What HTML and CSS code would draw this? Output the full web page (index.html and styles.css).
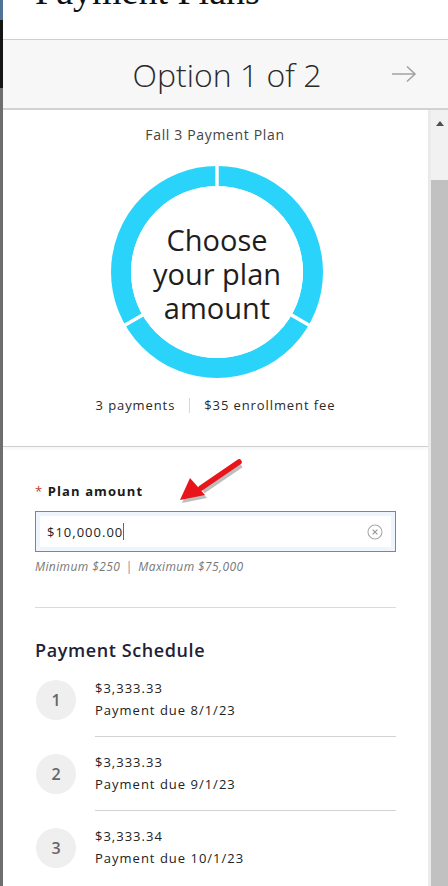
FILE: index.html
```html
<!DOCTYPE html>
<html lang="en">
<head>
<meta charset="utf-8">
<title>Payment Plans</title>
<link rel="stylesheet" href="styles.css">
</head>
<body>
<div class="frame">
  <div class="edge"></div>
  <div class="panel">
    <header class="top">
      <h1 class="title">Payment Plans</h1>
    </header>
    <div class="option-bar">
      <span></span>
      <span class="option-text">Option 1 of 2</span>
      <svg class="next" width="26" height="18" viewBox="0 0 26 18">
        <path d="M1 9H24M16 1.5L24 9L16 16.5" fill="none" stroke="#a3a3a3" stroke-width="1.6"/>
      </svg>
    </div>
    <div class="body-row">
      <main class="content">
        <section class="summary">
          <div class="plan-name">Fall 3 Payment Plan</div>
          <div class="donut">
            <svg class="ring" width="212" height="212" viewBox="0 0 212 212">
              <circle cx="106" cy="106" r="96" fill="none" stroke="#2ad3f9" stroke-width="20"/>
              <g stroke="#fff" stroke-width="3.5">
                <line x1="106" y1="106" x2="106" y2="-2"/>
                <line x1="106" y1="106" x2="106" y2="-2" transform="rotate(120 106 106)"/>
                <line x1="106" y1="106" x2="106" y2="-2" transform="rotate(240 106 106)"/>
              </g>
              <circle cx="106" cy="106" r="86" fill="#fff"/>
            </svg>
            <div class="donut-text">Choose<br>your plan<br>amount</div>
          </div>
          <div class="stats"><span>3 payments</span><span class="sep"></span><span>$35 enrollment fee</span></div>
        </section>
        <section class="form">
          <label class="label"><span class="req">*</span> Plan amount</label>
          <div class="input">
            <span class="value">$10,000.00</span><span class="caret"></span>
            <svg class="clear" width="16" height="16" viewBox="0 0 16 16">
              <circle cx="8" cy="8" r="7" fill="none" stroke="#a8a8a8" stroke-width="1.1"/>
              <path d="M5.6 5.6L10.4 10.4M10.4 5.6L5.6 10.4" stroke="#9a9a9a" stroke-width="1.2"/>
            </svg>
          </div>
          <div class="hint">Minimum $250 <span class="bar">|</span> Maximum $75,000</div>
          <hr class="rule">
          <h2 class="sched-title">Payment Schedule</h2>
          <ul class="schedule">
            <li class="pay">
              <span class="num">1</span>
              <div class="pay-text"><div>$3,333.33</div><div>Payment due 8/1/23</div></div>
            </li>
            <li class="pay">
              <span class="num">2</span>
              <div class="pay-text"><div>$3,333.33</div><div>Payment due 9/1/23</div></div>
            </li>
            <li class="pay">
              <span class="num">3</span>
              <div class="pay-text last"><div>$3,333.34</div><div>Payment due 10/1/23</div></div>
            </li>
          </ul>
        </section>
        <svg class="annot" width="80" height="60" viewBox="0 0 80 60">
          <g transform="translate(2 3)" opacity="0.25">
            <path d="M60 4L22 30" stroke="#000" stroke-width="5.5"/>
            <path d="M1 42L11 20L26 37Z" fill="#000"/>
          </g>
          <path d="M60 4L22 30" stroke="#e8151b" stroke-width="5.5" stroke-linecap="round"/>
          <path d="M1 42L11 20L26 37Z" fill="#e8151b"/>
        </svg>
      </main>
      <div class="scrollbar">
        <div class="scroll-up"></div>
        <div class="thumb"></div>
      </div>
    </div>
  </div>
</div>
</body>
</html>
```
FILE: styles.css
```css
* { box-sizing: border-box; }
html, body { margin: 0; padding: 0; }
body {
  width: 448px;
  height: 886px;
  overflow: hidden;
  background: #fff;
  font-family: "Open Sans", "Noto Sans", sans-serif;
  color: #222;
}
.frame { display: flex; height: 886px; }
.edge {
  width: 3px;
  flex: none;
  background: linear-gradient(to bottom, #4f7394 0, #4f7394 20px, #151515 20px, #151515 88px, #6e6e6e 88px, #6e6e6e 100%);
}
.panel { flex: 1; display: flex; flex-direction: column; min-width: 0; }
.top {
  height: 40px;
  overflow: hidden;
  border-bottom: 1px solid #cfcfcf;
  padding-left: 32px;
}
.title {
  margin: -28px 0 0;
  font-family: "Liberation Serif", serif;
  font-weight: normal;
  font-size: 38px;
  line-height: 38px;
  color: #111;
}
.option-bar {
  height: 70px;
  background: #f7f7f7;
  border-bottom: 2px solid #d2d2d2;
  display: grid;
  grid-template-columns: 1fr auto 1fr;
  align-items: center;
  padding: 0 31px 0 34px;
}
.option-text {
  font-size: 32px;
  font-weight: 300;
  color: #2a2a2a;
  line-height: 40px;
  padding-top: 1px;
}
.next { justify-self: end; }
.body-row { flex: 1; display: flex; min-height: 0; }
.content { position: relative; width: 425px; flex: none; }
.summary {
  padding: 16px 0 32px;
  border-bottom: 1px solid #cfcfcf;
  box-shadow: 0 2px 3px rgba(0,0,0,0.04);
  display: flex;
  flex-direction: column;
  align-items: center;
}
.plan-name {
  font-size: 14px;
  line-height: 18px;
  letter-spacing: 0.65px;
  color: #444;
  margin-left: -1px;
}
.donut {
  display: grid;
  margin-top: 22px;
  margin-left: 3px;
  width: 212px;
  height: 212px;
}
.ring, .donut-text { grid-area: 1 / 1; }
.donut-text {
  align-self: center;
  justify-self: center;
  text-align: center;
  font-size: 29px;
  line-height: 34px;
  padding-top: 4px;
  color: #1e1e1e;
}
.stats {
  margin-top: 18px;
  font-size: 13px;
  line-height: 18px;
  letter-spacing: 0.9px;
  color: #2a2a2a;
  display: flex;
  align-items: center;
}
.sep {
  width: 1px;
  height: 15px;
  background: #d6d6d6;
  margin: 0 14px 0 14px;
}
.form { padding: 35px 32px 0 32px; }
.label {
  display: block;
  font-size: 13px;
  font-weight: 700;
  line-height: 18px;
  letter-spacing: 1.1px;
  color: #1a1a1a;
}
.req { color: #c0392b; font-weight: 400; }
.input {
  margin-top: 11px;
  width: 361px;
  height: 41px;
  border: 1px solid #4a8fe0;
  box-shadow: inset 0 0 0 4px #eef5fd;
  display: flex;
  align-items: center;
  padding: 0 12px 0 11px;
  font-size: 13px;
  letter-spacing: 1px;
  color: #222;
}
.caret { width: 1px; height: 17px; background: #8e44ad; }
.clear { margin-left: auto; }
.hint {
  margin-top: 7px;
  font-size: 12px;
  line-height: 16px;
  letter-spacing: 0.4px;
  font-style: italic;
  color: #777;
}
.bar { color: #8e7f99; font-style: normal; margin: 0 2px; }
.rule {
  margin: 32px 0 0;
  width: 361px;
  border: none;
  border-top: 1px solid #dadada;
  height: 0;
}
.sched-title {
  margin: 30px 0 0;
  font-size: 18px;
  font-weight: 600;
  line-height: 24px;
  letter-spacing: 0.6px;
  color: #1f2235;
}
.schedule { list-style: none; margin: 1px 0 0; padding: 0 0 0 1px; }
.pay { display: flex; align-items: center; gap: 19px; }
.num {
  width: 40px;
  height: 40px;
  border-radius: 50%;
  background: #efefef;
  display: flex;
  align-items: center;
  justify-content: center;
  font-size: 16px;
  font-weight: 600;
  color: #666;
  flex: none;
}
.pay-text {
  flex: 1;
  padding: 14px 0 15px;
  border-bottom: 1px solid #d3d3d3;
  font-size: 13px;
  line-height: 22px;
  letter-spacing: 1px;
  color: #222;
}
.pay-text.last { border-bottom: none; }
.annot { position: absolute; left: 176px; top: 348px; }
.scrollbar {
  flex: 1;
  background: #f1f1f1;
  border-left: 3px solid #ebebeb;
  display: flex;
  flex-direction: column;
}
.scroll-up {
  height: 70px;
  position: relative;
}
.scroll-up::after {
  content: "";
  position: absolute;
  left: 5px;
  top: 11px;
  border-left: 4px solid transparent;
  border-right: 4px solid transparent;
  border-bottom: 5px solid #505050;
}
.thumb { flex: 1; background: #c1c1c1; }
```
